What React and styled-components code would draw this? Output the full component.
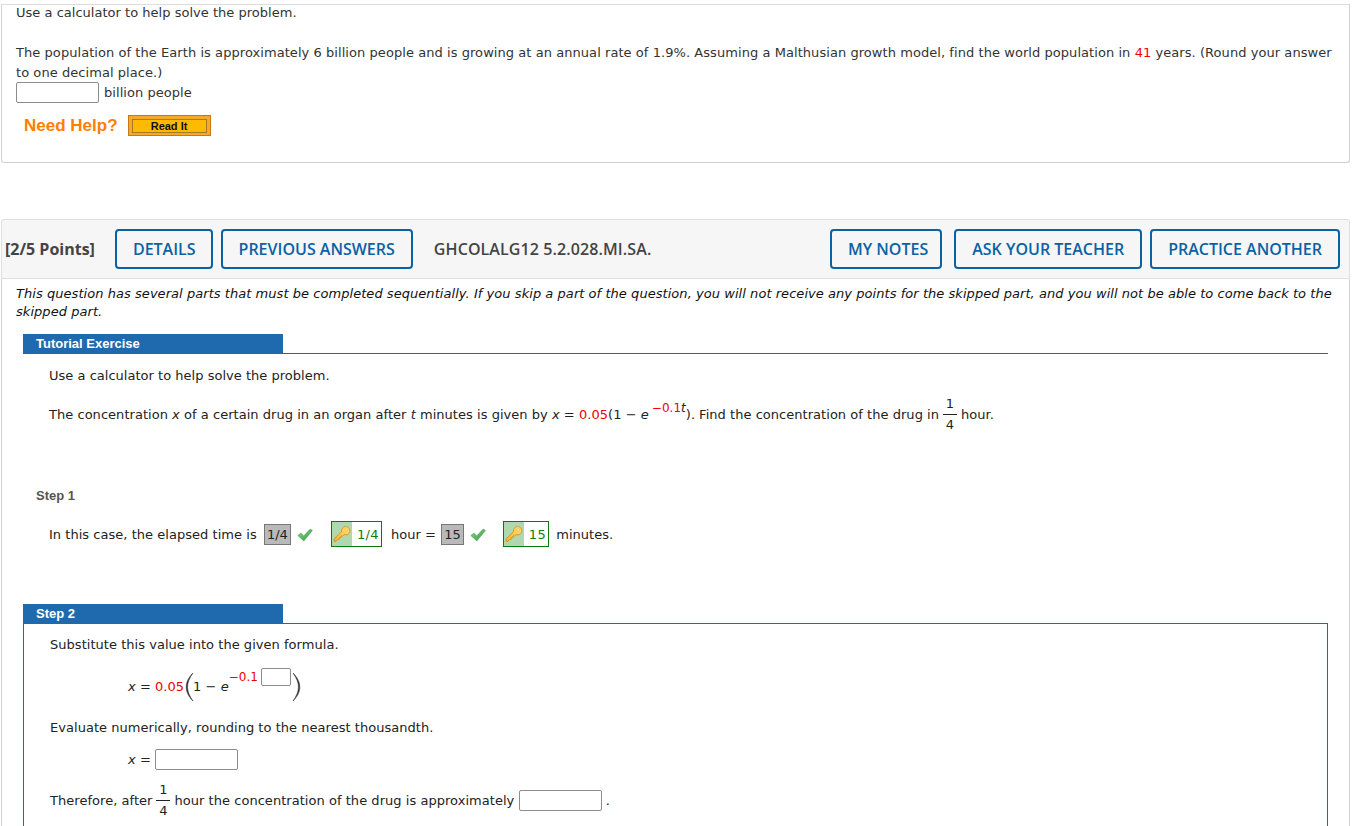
import React from "react";
import styled, { createGlobalStyle } from "styled-components";

const Global = createGlobalStyle`
  html, body { margin: 0; padding: 0; background: #fff; }
  body { height: 826px; overflow: hidden; font-family: "DejaVu Sans", Verdana, sans-serif; font-size: 13px; color: #333; }
  #root { height: 826px; overflow: hidden; }
`;
const Page = styled.div`
  width: 1350px; padding: 4px 0 0 1px; box-sizing: border-box;
  display: flex; flex-direction: column;
`;
const TopCard = styled.section`
  height: 159px; box-sizing: border-box; border: 1px solid #d0d0d0; border-top-color: #dcdcdc;
  border-radius: 0 0 3px 3px; padding: 0 14px; letter-spacing: 0.05px;
`;
const Para = styled.p`
  margin: ${p => p.$m || "0"}; line-height: ${p => p.$lh || 20}px; color: ${p => p.$c || "#333"};
  font-style: ${p => p.$i ? "italic" : "normal"}; letter-spacing: ${p => p.$ls ?? 0.05}px;
`;
const Red = styled.span`color: #f00000;`;
const Field = styled.span`
  display: inline-block; flex: none; box-sizing: border-box; width: ${p => p.$w || 83}px; height: ${p => p.$h || 21}px;
  border: 1px solid #8c8c8c; border-radius: 2px; background: #fff; vertical-align: middle;
`;
const RaisedField = styled(Field)`position: relative; top: -9px; margin-left: 3px;`;
const AnswerRow = styled.div`display: flex; align-items: center; gap: 5px; height: 21px; margin-top: -1px;`;
const HelpRow = styled.div`display: flex; align-items: center; margin: 12px 0 0 8px; height: 22px;`;
const HelpText = styled.span`font: 700 17px/22px "Liberation Sans", Arial, sans-serif; color: #ff8000; letter-spacing: 0;`;
const ReadIt = styled.span`
  margin-left: 10px; width: 83px; height: 21px; box-sizing: border-box; background: #f5a82a; border: 1px solid #c87a10;
  padding: 3px 3px 2px; display: flex; align-self: flex-start;
`;
const ReadInner = styled.span`
  flex: 1; background: #ffb900; border: 1px solid #a87a20; display: flex; align-items: center; justify-content: center;
  font: 700 11px "Liberation Sans", Arial, sans-serif; color: #111; letter-spacing: 0;
`;
const Question = styled.section`margin-top: 56px; display: flex; flex-direction: column;`;
const Header = styled.header`
  height: 60px; box-sizing: border-box; background: #f6f6f6; border: 1px solid #dfdfdf; border-radius: 3px 3px 0 0;
  display: flex; align-items: center; padding: 0 9px 0 3px; font-family: "Open Sans", sans-serif;
`;
const Points = styled.span`font: 700 16px "Open Sans", sans-serif; color: #444; margin-right: 20px;`;
const Btn = styled.span`
  height: 40px; box-sizing: border-box; border: 2px solid #0a62a5; border-radius: 4px; display: flex; align-items: center;
  padding: 0 ${p => p.$pr ?? 16}px 0 16px; font: 600 16px "Open Sans", sans-serif; color: #0a62a5; margin-right: ${p => p.$mr ?? 8}px; white-space: nowrap;
`;
const Code = styled.span`font: 600 16px "Open Sans", sans-serif; color: #444; margin-left: 13px; flex: 1; letter-spacing: 0.1px;`;
const Body = styled.div`
  border-left: 1px solid #d0d0d0; border-right: 1px solid #d0d0d0; padding: 6px 0 0 14px; height: 547px; box-sizing: border-box;
  letter-spacing: 0.035px;
`;
const Tutorial = styled.div`margin: 13px 21px 0 7px;`;
const BarHead = styled.div`border-bottom: 1px solid #1f6aae; height: 20px; box-sizing: border-box; margin-top: ${p => p.$mt || 0}px;`;
const Tab = styled.div`
  width: 260px; height: 19px; background: #1f6aae; color: #fff; padding-left: 13px; box-sizing: border-box;
  font: 700 13px/19px "Liberation Sans", Arial, sans-serif; letter-spacing: 0;
`;
const Inset = styled.div`padding-left: 26px; color: #222;`;
const MathLine = styled.div`display: flex; align-items: center; height: ${p => p.$h || 36}px; white-space: pre; margin: ${p => p.$m || 0}; color: #222;`;
const Frac = styled.span`
  display: inline-flex; flex-direction: column; align-items: center; width: 14px; margin: 0 4px; line-height: 14px; font-size: 13px;
`;
const FracTop = styled.span`border-bottom: 1px solid #222; width: 100%; text-align: center; padding-bottom: 3px;`;
const FracBot = styled.span`padding-top: 3px;`;
const Var = styled.i`font-style: italic;`;
const Sup = styled.span`font-size: 12px; position: relative; top: -6px; margin-left: 3px;`;
const After = styled.span`margin-left: 4px;`;
const StepLabel = styled.div`font: 700 13px/16px "Liberation Sans", Arial, sans-serif; color: #555; padding-left: 13px; letter-spacing: 0; margin-top: ${p => p.$mt}px;`;
const Graded = styled.span`
  display: inline-flex; align-items: center; height: 21px; padding: 0 2px; box-sizing: border-box; background: #b9b9b9; border: 1px solid #777; color: #222;
  margin-left: ${p => p.$ml}px;
`;
const Check = styled.svg`width: 16px; height: 14px; margin: 2px 0 0 6px; flex: none;`;
const KeyBox = styled.span`
  display: inline-flex; align-items: stretch; height: 26px; box-sizing: border-box; border: 1px solid #0a7a0a; background: #fff; color: #0a7f0a;
  margin: 0 ${p => p.$mr}px 0 ${p => p.$ml}px;
`;
const KeyCell = styled.span`width: 20px; background: #b0d8b0; display: flex; align-items: center; justify-content: center;`;
const KeyVal = styled.span`padding: 0 2px 0 5px; display: flex; align-items: center; letter-spacing: 0.4px;`;
const StepBox = styled.div`
  border: 1px solid #1f6aae; border-top: 0; border-bottom: 0; padding: 11px 0 0 26px; height: 220px; box-sizing: border-box; color: #222;
`;
const StepLine = styled.p`margin: ${p => p.$mt || 0}px 0 0; line-height: 20px;`;
const Indent = styled.div`display: flex; align-items: center; margin-left: 78px; height: ${p => p.$h}px; margin-top: ${p => p.$mt || 0}px; white-space: pre;`;
const ParenSvg = styled.svg`width: 9px; height: 30px; flex: none; position: relative; top: 1px; margin: ${p => p.$m};`;
const Raised = styled.span`font-size: 12px; position: relative; top: -9px;`;
const LineFlex = styled.div`display: flex; align-items: center; height: 32px; margin-top: ${p => p.$mt}px; white-space: pre; letter-spacing: 0.04px;`;

const CheckIcon = () => (
  <Check viewBox="0 0 16 14">
    <defs>
      <linearGradient id="chk" x1="0" y1="0" x2="1" y2="1">
        <stop offset="0" stopColor="#8ad88a" />
        <stop offset="1" stopColor="#2f9a3f" />
      </linearGradient>
    </defs>
    <path d="M0.8 7.5 L4 5 L6.6 8 L13.2 1 L15.4 2.6 L6.8 13 Z" fill="url(#chk)" stroke="#3a9a4a" strokeWidth="0.5" />
  </Check>
);
const KeyIcon = () => (
  <svg width="20" height="20" viewBox="0 0 20 20">
    <defs>
      <linearGradient id="gold" x1="0" y1="1" x2="1" y2="0">
        <stop offset="0" stopColor="#ffb020" />
        <stop offset="1" stopColor="#ffe27a" />
      </linearGradient>
    </defs>
    <path d="M2 15 L9.5 7.8 C9 5 10.8 2.6 13.5 2.6 C16.4 2.6 18.2 4.8 17.8 7.4 C17.3 10 14.6 11.6 12.2 10.6 L10.8 12 L9 12 L9 13.6 L7.2 13.6 L7.2 15.4 L5.4 15.6 L4 17.4 L2.2 17.4 Z" fill="url(#gold)" stroke="#d08a18" strokeWidth="0.8" strokeLinejoin="round" />
    <ellipse cx="14.4" cy="5.8" rx="1.4" ry="1.1" fill="#fff3b8" stroke="#d8a030" strokeWidth="0.5" />
  </svg>
);
const Fraction = () => (
  <Frac><FracTop>1</FracTop><FracBot>4</FracBot></Frac>
);
const LeftParen = () => (
  <ParenSvg viewBox="0 0 9 30" $m="0 -1px 0 1px"><path d="M8 1 C3 6 1.2 10.5 1.2 15 C1.2 19.5 3 24 8 29 C4.4 24 2.6 19.5 2.6 15 C2.6 10.5 4.4 6 8 1 Z" fill="#333" stroke="#333" strokeWidth="0.5" /></ParenSvg>
);
const RightParen = () => (
  <ParenSvg viewBox="0 0 9 30" $m="0 0 0 1px"><path d="M1 1 C6 6 7.8 10.5 7.8 15 C7.8 19.5 6 24 1 29 C4.6 24 6.4 19.5 6.4 15 C6.4 10.5 4.6 6 1 1 Z" fill="#333" stroke="#333" strokeWidth="0.5" /></ParenSvg>
);

export default function App() {
  return (
    <Page>
      <Global />
      <TopCard>
        <Para $lh={16} $ls={0.02}>Use a calculator to help solve the problem.</Para>
        <Para $m="22px 0 0 0" $ls={0.06}>The population of the Earth is approximately 6 billion people and is growing at an annual rate of 1.9%. Assuming a Malthusian growth model, find the world population in <Red>41</Red> years. (Round your answer to one decimal place.)</Para>
        <AnswerRow><Field />billion people</AnswerRow>
        <HelpRow><HelpText>Need Help?</HelpText><ReadIt><ReadInner>Read It</ReadInner></ReadIt></HelpRow>
      </TopCard>
      <Question>
        <Header>
          <Points>[2/5 Points]</Points>
          <Btn $pr={15}>DETAILS</Btn>
          <Btn>PREVIOUS ANSWERS</Btn>
          <Code>GHCOLALG12 5.2.028.MI.SA.</Code>
          <Btn $mr={12} $pr={12}>MY NOTES</Btn>
          <Btn>ASK YOUR TEACHER</Btn>
          <Btn $mr={0}>PRACTICE ANOTHER</Btn>
        </Header>
        <Body>
          <Para $i $lh={18} $c="#111" $ls={0.05}>This question has several parts that must be completed sequentially. If you skip a part of the question, you will not receive any points for the skipped part, and you will not be able to come back to the skipped part.</Para>
          <Tutorial>
            <BarHead><Tab>Tutorial Exercise</Tab></BarHead>
            <Inset>
              <Para $m="12px 0 0 0" $c="#222" $lh={20} $ls={0.02}>Use a calculator to help solve the problem.</Para>
              <MathLine $h={36} $m="10px 0 0 0">The concentration <Var>x</Var> of a certain drug in an organ after <Var>t</Var> minutes is given by <Var>x</Var> = <Red>0.05</Red>(1 − <Var>e</Var><Sup><Red>−0.1</Red><Var>t</Var></Sup>).<After>Find the concentration of the drug in</After><Fraction />hour.</MathLine>
            </Inset>
            <StepLabel $mt={56}>Step 1</StepLabel>
            <Inset>
              <MathLine $h={26} $m="17px 0 0 0">In this case, the elapsed time is <Graded $ml={3}>1/4</Graded><CheckIcon /><KeyBox $ml={18} $mr={9}><KeyCell><KeyIcon /></KeyCell><KeyVal>1/4</KeyVal></KeyBox>hour = <Graded $ml={1}>15</Graded><CheckIcon /><KeyBox $ml={17} $mr={7}><KeyCell><KeyIcon /></KeyCell><KeyVal>15</KeyVal></KeyBox>minutes.</MathLine>
            </Inset>
            <BarHead $mt={57}><Tab>Step 2</Tab></BarHead>
            <StepBox>
              <StepLine>Substitute this value into the given formula.</StepLine>
              <Indent $h={40} $mt={11}><Var>x</Var> = <Red>0.05</Red><LeftParen />1 − <Var>e</Var><Raised><Red>−0.1</Red></Raised><RaisedField $w={30} $h={18} /><RightParen /></Indent>
              <StepLine $mt={12}>Evaluate numerically, rounding to the nearest thousandth.</StepLine>
              <Indent $h={21} $mt={11}><Var>x</Var> = <Field /></Indent>
              <LineFlex $mt={14}>Therefore, after<Fraction />hour the concentration of the drug is approximately <Field /> .</LineFlex>
            </StepBox>
          </Tutorial>
        </Body>
      </Question>
    </Page>
  );
}
